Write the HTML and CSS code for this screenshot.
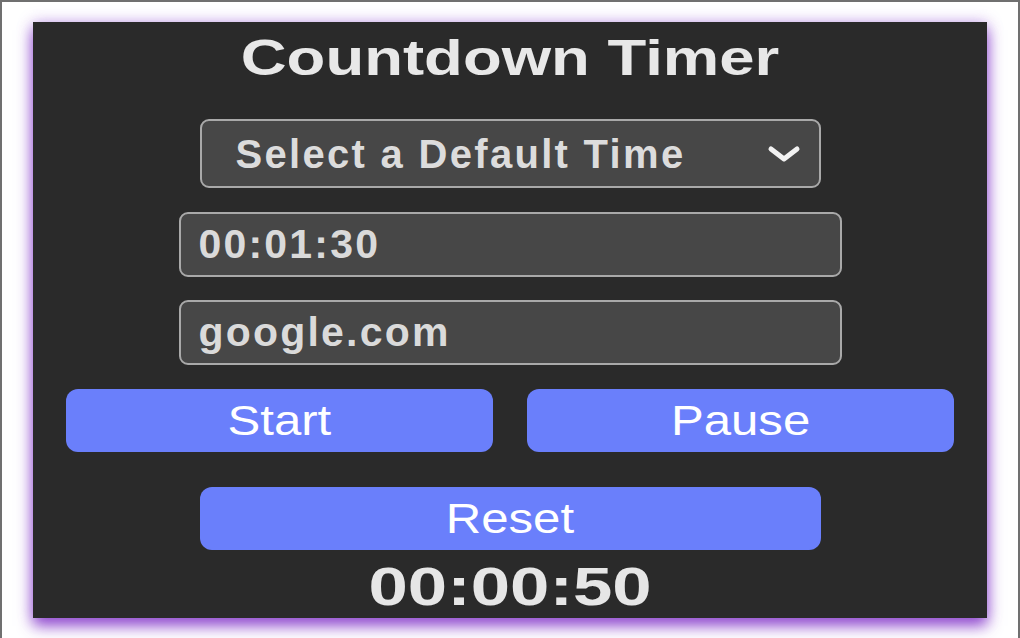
FILE: index.html
```html
<!DOCTYPE html>
<html lang="en">
<head>
<meta charset="utf-8">
<title>Countdown Timer</title>
<link rel="stylesheet" href="styles.css">
</head>
<body>
<div class="frame">
  <main class="panel">
    <h1 class="title"><span class="wide wide-title">Countdown Timer</span></h1>
    <div class="select-wrap">
      <select class="select">
        <option>Select a Default Time</option>
      </select>
      <svg class="chevron" width="34" height="18" viewBox="0 0 34 18" aria-hidden="true">
        <polyline points="4,4 17,14 30,4" fill="none" stroke="#f2f2f2" stroke-width="5" stroke-linecap="round" stroke-linejoin="round"/>
      </svg>
    </div>
    <input class="field field-time" type="text" value="00:01:30">
    <input class="field field-site" type="text" value="google.com">
    <div class="btn-row">
      <button class="btn"><span class="wide wide-btn">Start</span></button>
      <button class="btn"><span class="wide wide-btn">Pause</span></button>
    </div>
    <button class="btn btn-reset"><span class="wide wide-btn">Reset</span></button>
    <div class="timer"><span class="wide wide-timer">00:00:50</span></div>
  </main>
</div>
</body>
</html>
```
FILE: styles.css
```css
html, body {
  margin: 0;
  padding: 0;
  background: #ffffff;
}

body {
  font-family: "Liberation Sans", Arial, sans-serif;
}

.frame {
  box-sizing: border-box;
  height: 638px;
  border: 2px solid #707070;
  border-bottom: 0;
  padding: 20px 0 0 31px;
  overflow: hidden;
}

.panel {
  box-sizing: border-box;
  width: 954px;
  height: 596px;
  background: #2a2a2a;
  box-shadow: 0 8px 14px rgba(130, 50, 200, 0.85), 0 0 14px rgba(150, 90, 220, 0.4);
  display: flex;
  flex-direction: column;
  align-items: center;
  padding: 10px 33px 0;
}

.wide {
  display: inline-block;
  transform-origin: center;
}

.wide-title {
  transform: scaleX(1.27);
}

.wide-timer {
  transform: scaleX(1.31);
}

.wide-btn {
  transform: scaleX(1.17);
}

.title {
  margin: 0;
  font-size: 50px;
  line-height: 52px;
  font-weight: bold;
  color: #e8e8e8;
}

.select-wrap {
  position: relative;
  margin-top: 35px;
  width: 621px;
  height: 69px;
}

.select {
  appearance: none;
  -webkit-appearance: none;
  box-sizing: border-box;
  width: 100%;
  height: 100%;
  margin: 0;
  border: 2px solid #a9a9a9;
  border-radius: 9px;
  background: #474747;
  color: #dcdcdc;
  font-family: "Liberation Sans", Arial, sans-serif;
  font-size: 40px;
  font-weight: bold;
  letter-spacing: 2.3px;
  padding: 0 0 0 34px;
  outline: none;
}

.chevron {
  position: absolute;
  right: 20px;
  top: 26px;
  pointer-events: none;
}

.field {
  box-sizing: border-box;
  width: 663px;
  height: 65px;
  margin: 24px 0 0;
  border: 2px solid #a9a9a9;
  border-radius: 9px;
  background: #474747;
  color: #dadada;
  font-family: "Liberation Sans", Arial, sans-serif;
  font-size: 41px;
  font-weight: bold;
  letter-spacing: 2.2px;
  padding: 0 18px;
  outline: none;
}

.field-site {
  margin-top: 23px;
}

.btn-row {
  align-self: stretch;
  display: flex;
  gap: 34px;
  margin-top: 24px;
}

.btn {
  box-sizing: border-box;
  height: 63px;
  border: 0;
  border-radius: 12px;
  background: #6a7ffb;
  color: #ffffff;
  font-family: "Liberation Sans", Arial, sans-serif;
  font-size: 42px;
  font-weight: normal;
  padding: 0;
  margin: 0;
}

.btn-row .btn {
  flex: 1;
}

.btn-reset {
  width: 621px;
  margin-top: 35px;
}

.timer {
  margin-top: 8px;
  font-size: 54px;
  line-height: 56px;
  font-weight: bold;
  color: #e6e6e6;
}
```
